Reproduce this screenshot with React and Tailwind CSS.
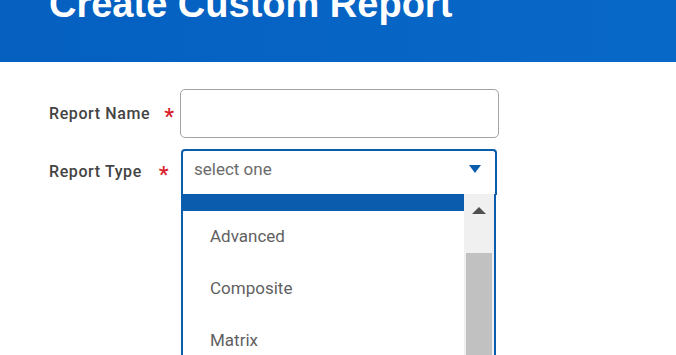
import { useState } from "react";

const options = ["", "Advanced", "Composite", "Matrix", "Simple", "Transposed"];

const App = () => {
  const [open] = useState(true);

  return (
    <div className="w-[676px] h-[355px] overflow-hidden bg-white font-['Roboto',sans-serif]">
      {/* Header */}
      <div className="h-[62px] bg-gradient-to-r from-[#0560c0] to-[#0868c8] overflow-hidden">
        <h1 className="pl-[49px] -mt-[18px] text-[38px] leading-[44px] font-bold text-white font-['Liberation_Sans',Arial,sans-serif]">
          Create Custom Report
        </h1>
      </div>

      {/* Form */}
      <div className="pl-[49px] pt-[27px] flex flex-col gap-[11px]">
        <div className="flex items-center">
          <div className="w-[131px] flex items-center text-[16px] font-medium tracking-[0.6px] text-[#444444]">
            <span>Report Name</span>
            <span className="ml-[14px] text-[22px] leading-none text-[#d9202a] mt-[6px]">*</span>
          </div>
          <div className="w-[319px] h-[49px] border border-[#a3a3a3] rounded-[5px] bg-white" />
        </div>

        <div className="flex items-start">
          <div className="w-[132px] h-[46px] flex items-center text-[16px] font-medium tracking-[0.6px] text-[#444444]">
            <span>Report Type</span>
            <span className="ml-[17px] text-[22px] leading-none text-[#d9202a] mt-[6px]">*</span>
          </div>
          <div className="relative w-[316px]">
            <div className="h-[46px] border-2 border-b-0 border-[#0b5cad] rounded-t-[4px] flex items-start justify-between pl-[11px] pr-[14px] pt-[7px]">
              <span className="text-[17px] leading-[22px] text-[#6b6b6b]">select one</span>
              <svg width="12" height="8" viewBox="0 0 12 8" className="mt-[7px]">
                <path d="M0 0 H12 L6 8 Z" fill="#0b5cad" />
              </svg>
            </div>

            {/* Dropdown list */}
            {open && (
              <div className="absolute left-0 -top-[1px] mt-[46px] w-[315px] h-[200px] border-x-2 border-[#0b5cad] bg-white flex">
                <div className="flex-1 overflow-hidden">
                  <div className="-mt-[35px]">
                    {options.map((opt, i) => (
                      <div
                        key={i}
                        className={`h-[52px] flex items-center pl-[27px] text-[17px] text-[#5f5f5f] ${
                          i === 0 ? "bg-[#0b5cad]" : ""
                        }`}
                      >
                        {opt}
                      </div>
                    ))}
                  </div>
                </div>
                {/* Scrollbar */}
                <div className="w-[30px] bg-[#f0f0f0] flex flex-col">
                  <div className="h-[59px] flex justify-center pt-[13px]">
                    <svg width="14" height="7" viewBox="0 0 14 7">
                      <path d="M0 7 L7 0 L14 7 Z" fill="#505050" />
                    </svg>
                  </div>
                  <div className="flex-1 mx-[2px] bg-[#c1c1c1]" />
                </div>
              </div>
            )}
          </div>
        </div>
      </div>
    </div>
  );
};

export default App;
